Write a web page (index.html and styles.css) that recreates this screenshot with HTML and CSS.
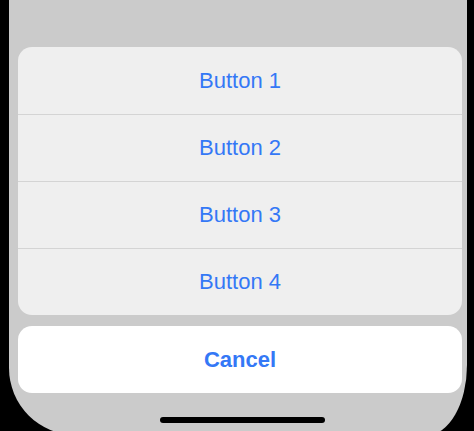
FILE: index.html
```html
<!DOCTYPE html>
<html>
<head>
<meta charset="utf-8">
<link rel="stylesheet" href="styles.css">
</head>
<body>
<div class="phone">
  <div class="screen">
    <div class="sheet">
      <div class="row">Button 1</div>
      <div class="row">Button 2</div>
      <div class="row">Button 3</div>
      <div class="row">Button 4</div>
    </div>
    <div class="cancel">Cancel</div>
    <div class="home-bar"></div>
  </div>
</div>
</body>
</html>
```
FILE: styles.css
```css
html, body {
  margin: 0;
  padding: 0;
  background: #000;
  overflow: hidden;
  height: 431px;
}
.phone {
  display: flex;
  padding-left: 9px;
  font-family: "Liberation Sans", Arial, sans-serif;
}
.screen {
  width: 458px;
  height: 435px;
  box-sizing: border-box;
  background: #cbcbcb;
  border-bottom-left-radius: 67px 67px;
  border-bottom-right-radius: 40px 70px;
  padding: 47px 5px 0 9px;
  display: flex;
  flex-direction: column;
  align-items: stretch;
}
.sheet {
  background: #efefef;
  border-radius: 14px;
  overflow: hidden;
  display: flex;
  flex-direction: column;
}
.row {
  box-sizing: border-box;
  height: 67px;
  display: flex;
  align-items: center;
  justify-content: center;
  font-size: 22px;
  color: #3478f6;
  border-top: 1px solid #d4d4d4;
}
.row:first-child {
  border-top: none;
}
.cancel {
  margin-top: 11px;
  height: 67px;
  background: #fff;
  border-radius: 14px;
  display: flex;
  align-items: center;
  justify-content: center;
  font-size: 22px;
  font-weight: bold;
  color: #3478f6;
}
.home-bar {
  align-self: center;
  margin-top: 24px;
  width: 165px;
  height: 6px;
  border-radius: 3px;
  background: #000;
  margin-left: 4px;
}
```
